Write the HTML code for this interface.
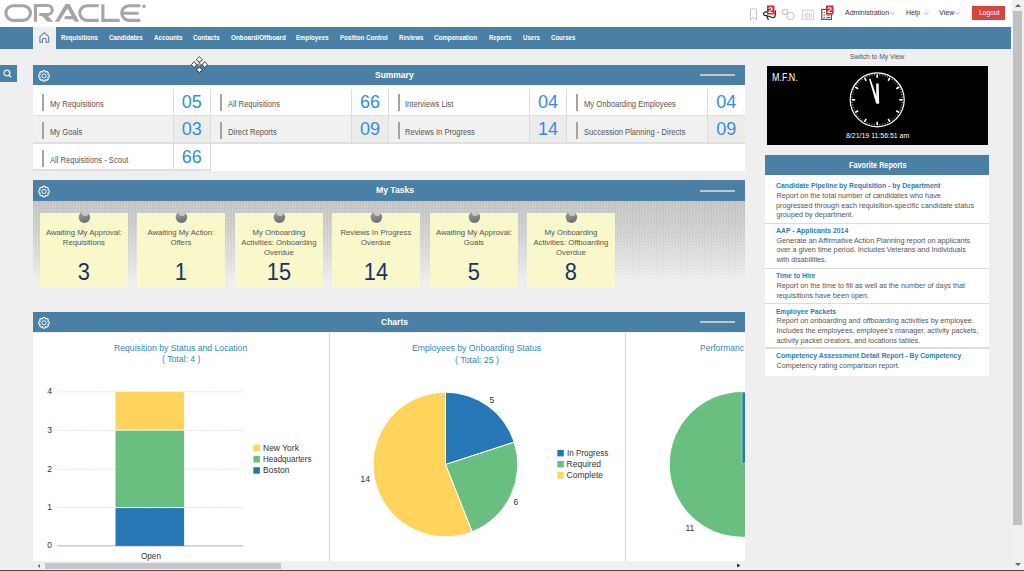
<!DOCTYPE html>
<html><head><meta charset="utf-8">
<style>
*{margin:0;padding:0;box-sizing:border-box}
html,body{width:1024px;height:571px;overflow:hidden;background:#efefef;font-family:"Liberation Sans",sans-serif}
.a{position:absolute}
.t{position:absolute;white-space:nowrap;transform-origin:0 50%}
.nv{color:#fff;font-weight:bold;font-size:7px}
.ph{position:absolute;left:33px;width:712px;height:20.5px;background:#4a80a5}
.min{position:absolute;left:667px;top:9.2px;width:35px;height:2px;background:#c9c4b8}
.lbl{color:#555;font-size:8.4px}
.num{color:#2f8cf0;font-size:18px}
.nt{color:#555;font-size:8px}
.nn{color:#1c2f66;font-size:23.5px;transform-origin:50% 50%}
.ct{color:#2a88c8;font-size:8.5px}
.ax{color:#333;font-size:8.5px}
.lg{color:#333;font-size:8.5px}
.fr{color:#2b7bc0;font-size:7px;font-weight:bold}
.fd{color:#555;font-size:7.25px}
</style></head><body>
<div class="a" style="left:0;top:0;width:1012px;height:27px;background:#fff"></div>
<svg class="a" style="left:0;top:0" width="150" height="27" viewBox="0 0 150 27">
<g fill="none" stroke="#a6a6a6" stroke-width="3.1">
<rect x="5.85" y="5.75" width="24.6" height="14.6" rx="7.3"/>
<path d="M35.45 4 V21.8 M35.45 5.55 H47.8 A4.45 4.45 0 0 1 47.8 14.45 H39.3"/>
<path d="M98.8 5.75 H87.05 A7.3 7.3 0 0 0 87.05 20.35 H98.8"/>
<path d="M102.9 4.2 V20.35 H119.7"/>
<path d="M140.3 5.75 H129.05 A7.3 7.3 0 0 0 129.05 20.35 H140.3 M123.5 13.2 H138.5"/>
<path d="M66 17.6 H75.5" stroke-linecap="round"/>
</g>
<g fill="#a6a6a6">
<polygon points="39.3,12.9 45.3,12.9 53.2,21.8 47.4,21.8"/>
<polygon points="54.9,21.8 65.5,4 69.6,4 79,21.8 74.7,21.8 67.55,8.6 59,21.8"/>
<circle cx="144" cy="6.3" r="1.8"/>
</g></svg>
<svg class="a" style="left:745px;top:3px" width="95" height="20" viewBox="745 3 95 20">
<path d="M750.5 9 H756.5 V20 L753.5 17 L750.5 20 Z" fill="none" stroke="#c4c4c4" stroke-width="1"/>
<path d="M767 11.8 L765 12 Q763.2 12.6 763.6 14.2 Q764 15.6 766.5 15.6 L772.5 17.5 Q775 18 775.2 15.5 L775.3 11 M766.8 15.8 L768.2 19.5" fill="none" stroke="#2a2a2a" stroke-width="1.3" stroke-linejoin="round" stroke-linecap="round"/>
<rect x="767" y="5.5" width="7.5" height="9" fill="#d9262c"/>
<text x="770.6" y="13.1" font-size="8.5" font-weight="bold" fill="#fff" text-anchor="middle" font-family="Liberation Sans">2</text>
<circle cx="785" cy="12" r="2.6" fill="none" stroke="#c8c8c8" stroke-width="1.1"/>
<circle cx="790.5" cy="16" r="3.5" fill="none" stroke="#c8c8c8" stroke-width="1.1"/>
<rect x="802.3" y="10.3" width="11.2" height="9" fill="none" stroke="#d2d2d2" stroke-width="1"/>
<path d="M805.2 12.8 V18.5 M807.2 11.8 V18.5 M809.2 12.3 V18.5 M811.2 13 V18.5" stroke="#cdcdcd" stroke-width="1"/>
<rect x="821.8" y="9.4" width="9.6" height="10" fill="none" stroke="#555" stroke-width="1.2"/>
<path d="M823.5 12.5 H825 M826.5 12.5 H830 M823.5 15 H825 M826.5 15 H830 M823.5 17.5 H825 M826.5 17.5 H830" stroke="#555" stroke-width="1"/>
<rect x="826" y="5.5" width="7.5" height="9" fill="#d9262c"/>
<text x="829.6" y="13.1" font-size="8.5" font-weight="bold" fill="#fff" text-anchor="middle" font-family="Liberation Sans">2</text>
</svg>
<span class="t " id="t1" style="left:845.0px;top:8.0px;line-height:10px;color:#333;font-size:7.5px;transform:scaleX(0.926);">Administration</span>
<span class="t " id="t2" style="left:906.4px;top:8.0px;line-height:10px;color:#333;font-size:7.5px;transform:scaleX(0.920);">Help</span>
<span class="t " id="t3" style="left:939.3px;top:8.0px;line-height:10px;color:#333;font-size:7.5px;transform:scaleX(0.949);">View</span>
<svg class="a" style="left:890.0px;top:12px" width="5" height="3"><path d="M0.5 0.5 L2.5 2.3 L4.5 0.5" fill="none" stroke="#999" stroke-width="0.8"/></svg>
<svg class="a" style="left:923.5px;top:12px" width="5" height="3"><path d="M0.5 0.5 L2.5 2.3 L4.5 0.5" fill="none" stroke="#999" stroke-width="0.8"/></svg>
<svg class="a" style="left:955.0px;top:12px" width="5" height="3"><path d="M0.5 0.5 L2.5 2.3 L4.5 0.5" fill="none" stroke="#999" stroke-width="0.8"/></svg>
<div class="a" style="left:972px;top:5.5px;width:33px;height:14px;background:#d9443f"></div>
<span class="t " id="t4" style="left:978.5px;top:7.8px;line-height:10px;color:#fff;font-size:8px;transform:scaleX(0.838);">Logout</span>
<div class="a" style="left:0;top:27px;width:1011px;height:22px;background:#4a80a5"></div>
<div class="a" style="left:33px;top:27px;width:23px;height:23px;background:#efefef"></div>
<svg class="a" style="left:38px;top:30.5px" width="13" height="14" viewBox="0 0 13 14"><path d="M1.9 11.2 V6.3 Q1.9 5.6 2.5 5.1 L6.3 1.7 L10.1 5.1 Q10.7 5.6 10.7 6.3 V11.2 H8.1 V8.7 Q8.1 7.2 6.3 7.2 Q4.5 7.2 4.5 8.7 V11.2 Z" fill="none" stroke="#5d7ea3" stroke-width="1.1" stroke-linejoin="round"/></svg>
<span class="t nv" id="t5" style="left:60.9px;top:33.3px;line-height:10px;;transform:scaleX(0.876);">Requisitions</span>
<span class="t nv" id="t6" style="left:108.9px;top:33.3px;line-height:10px;;transform:scaleX(0.896);">Candidates</span>
<span class="t nv" id="t7" style="left:153.6px;top:33.3px;line-height:10px;;transform:scaleX(0.890);">Accounts</span>
<span class="t nv" id="t8" style="left:193.0px;top:33.3px;line-height:10px;;transform:scaleX(0.888);">Contacts</span>
<span class="t nv" id="t9" style="left:230.8px;top:33.3px;line-height:10px;;transform:scaleX(0.905);">Onboard/Offboard</span>
<span class="t nv" id="t10" style="left:296.4px;top:33.3px;line-height:10px;;transform:scaleX(0.882);">Employees</span>
<span class="t nv" id="t11" style="left:339.8px;top:33.3px;line-height:10px;;transform:scaleX(0.878);">Position Control</span>
<span class="t nv" id="t12" style="left:399.0px;top:33.3px;line-height:10px;;transform:scaleX(0.867);">Reviews</span>
<span class="t nv" id="t13" style="left:434.2px;top:33.3px;line-height:10px;;transform:scaleX(0.890);">Compensation</span>
<span class="t nv" id="t14" style="left:489.2px;top:33.3px;line-height:10px;;transform:scaleX(0.854);">Reports</span>
<span class="t nv" id="t15" style="left:523.0px;top:33.3px;line-height:10px;;transform:scaleX(0.873);">Users</span>
<span class="t nv" id="t16" style="left:551.4px;top:33.3px;line-height:10px;;transform:scaleX(0.867);">Courses</span>
<div class="a" style="left:0;top:64.8px;width:17px;height:16.8px;background:#4a80a5"></div>
<svg class="a" style="left:0;top:65px" width="17" height="17"><circle cx="6.9" cy="8" r="2.9" fill="none" stroke="#e6edf2" stroke-width="1.4"/><path d="M9.1 10.3 L10.6 11.8" stroke="#e6edf2" stroke-width="1.5" stroke-linecap="round"/></svg>
<div class="ph" style="top:64.8px"><div class="min"></div></div>
<svg class="a" style="left:0;top:0;overflow:visible" width="1" height="1"><path d="M47.51 74.45 A1.50 1.50 0 1 1 47.51 77.35 A1.50 1.50 0 1 1 45.45 79.41 A1.50 1.50 0 1 1 42.55 79.41 A1.50 1.50 0 1 1 40.49 77.35 A1.50 1.50 0 1 1 40.49 74.45 A1.50 1.50 0 1 1 42.55 72.39 A1.50 1.50 0 1 1 45.45 72.39 A1.50 1.50 0 1 1 47.51 74.45 Z" fill="none" stroke="#fff" stroke-width="1.1"/><circle cx="44.00" cy="75.90" r="2.1" fill="none" stroke="#fff" stroke-width="0.9"/></svg>
<span class="t " id="t17" style="left:375.0px;top:70.3px;line-height:10px;color:#fff;font-weight:bold;font-size:8.5px;transform:scaleX(0.996);">Summary</span>
<div class="a" style="left:33px;top:85px;width:712px;height:86px;background:#fff"></div>
<div class="a" style="left:33.0px;top:115.25px;width:177.5px;height:1.5px;background:#e0e0e0"></div>
<div class="a" style="left:172.65px;top:88.5px;width:1.1px;height:27.5px;background:#dcdcdc"></div>
<div class="a" style="left:209.95px;top:88.5px;width:1.1px;height:27.5px;background:#dcdcdc"></div>
<div class="a" style="left:41.7px;top:94.1px;width:2.2px;height:16.6px;background:#aaa398"></div>
<span class="t lbl" id="t18" style="left:49.5px;top:99.2px;line-height:10px;;transform:scaleX(0.910);">My Requisitions</span>
<span class="t num" id="t19" style="left:173.2px;top:91.5px;line-height:20px;width:37.3px;text-align:center;">05</span>
<div class="a" style="left:210.5px;top:115.25px;width:178.0px;height:1.5px;background:#e0e0e0"></div>
<div class="a" style="left:350.95px;top:88.5px;width:1.1px;height:27.5px;background:#dcdcdc"></div>
<div class="a" style="left:387.95px;top:88.5px;width:1.1px;height:27.5px;background:#dcdcdc"></div>
<div class="a" style="left:220.0px;top:94.1px;width:2.2px;height:16.6px;background:#aaa398"></div>
<span class="t lbl" id="t20" style="left:227.6px;top:99.2px;line-height:10px;;transform:scaleX(0.910);">All Requisitions</span>
<span class="t num" id="t21" style="left:351.5px;top:91.5px;line-height:20px;width:37.0px;text-align:center;">66</span>
<div class="a" style="left:388.5px;top:115.25px;width:178.0px;height:1.5px;background:#e0e0e0"></div>
<div class="a" style="left:529.15px;top:88.5px;width:1.1px;height:27.5px;background:#dcdcdc"></div>
<div class="a" style="left:565.95px;top:88.5px;width:1.1px;height:27.5px;background:#dcdcdc"></div>
<div class="a" style="left:398.0px;top:94.1px;width:2.2px;height:16.6px;background:#aaa398"></div>
<span class="t lbl" id="t22" style="left:405.3px;top:99.2px;line-height:10px;;transform:scaleX(0.910);">Interviews List</span>
<span class="t num" id="t23" style="left:529.7px;top:91.5px;line-height:20px;width:36.8px;text-align:center;">04</span>
<div class="a" style="left:566.5px;top:115.25px;width:178.5px;height:1.5px;background:#e0e0e0"></div>
<div class="a" style="left:706.85px;top:88.5px;width:1.1px;height:27.5px;background:#dcdcdc"></div>
<div class="a" style="left:576.0px;top:94.1px;width:2.2px;height:16.6px;background:#aaa398"></div>
<span class="t lbl" id="t24" style="left:583.6px;top:99.2px;line-height:10px;;transform:scaleX(0.910);">My Onboarding Employees</span>
<span class="t num" id="t25" style="left:707.4px;top:91.5px;line-height:20px;width:37.6px;text-align:center;">04</span>
<div class="a" style="left:33.0px;top:116.0px;width:140.2px;height:27.0px;background:#f1f1f1"></div>
<div class="a" style="left:173.2px;top:116.0px;width:37.3px;height:27.0px;background:#ecece8"></div>
<div class="a" style="left:33.0px;top:142.25px;width:177.5px;height:1.5px;background:#e0e0e0"></div>
<div class="a" style="left:172.65px;top:116.0px;width:1.1px;height:27.0px;background:#dcdcdc"></div>
<div class="a" style="left:209.95px;top:116.0px;width:1.1px;height:27.0px;background:#dcdcdc"></div>
<div class="a" style="left:41.7px;top:122.2px;width:2.2px;height:16.6px;background:#aaa398"></div>
<span class="t lbl" id="t26" style="left:49.5px;top:127.1px;line-height:10px;;transform:scaleX(0.910);">My Goals</span>
<span class="t num" id="t27" style="left:173.2px;top:119.4px;line-height:20px;width:37.3px;text-align:center;">03</span>
<div class="a" style="left:210.5px;top:116.0px;width:141.0px;height:27.0px;background:#f1f1f1"></div>
<div class="a" style="left:351.5px;top:116.0px;width:37.0px;height:27.0px;background:#ecece8"></div>
<div class="a" style="left:210.5px;top:142.25px;width:178.0px;height:1.5px;background:#e0e0e0"></div>
<div class="a" style="left:350.95px;top:116.0px;width:1.1px;height:27.0px;background:#dcdcdc"></div>
<div class="a" style="left:387.95px;top:116.0px;width:1.1px;height:27.0px;background:#dcdcdc"></div>
<div class="a" style="left:220.0px;top:122.2px;width:2.2px;height:16.6px;background:#aaa398"></div>
<span class="t lbl" id="t28" style="left:227.6px;top:127.1px;line-height:10px;;transform:scaleX(0.910);">Direct Reports</span>
<span class="t num" id="t29" style="left:351.5px;top:119.4px;line-height:20px;width:37.0px;text-align:center;">09</span>
<div class="a" style="left:388.5px;top:116.0px;width:141.2px;height:27.0px;background:#f1f1f1"></div>
<div class="a" style="left:529.7px;top:116.0px;width:36.8px;height:27.0px;background:#ecece8"></div>
<div class="a" style="left:388.5px;top:142.25px;width:178.0px;height:1.5px;background:#e0e0e0"></div>
<div class="a" style="left:529.15px;top:116.0px;width:1.1px;height:27.0px;background:#dcdcdc"></div>
<div class="a" style="left:565.95px;top:116.0px;width:1.1px;height:27.0px;background:#dcdcdc"></div>
<div class="a" style="left:398.0px;top:122.2px;width:2.2px;height:16.6px;background:#aaa398"></div>
<span class="t lbl" id="t30" style="left:405.3px;top:127.1px;line-height:10px;;transform:scaleX(0.910);">Reviews In Progress</span>
<span class="t num" id="t31" style="left:529.7px;top:119.4px;line-height:20px;width:36.8px;text-align:center;">14</span>
<div class="a" style="left:566.5px;top:116.0px;width:140.9px;height:27.0px;background:#f1f1f1"></div>
<div class="a" style="left:707.4px;top:116.0px;width:37.6px;height:27.0px;background:#ecece8"></div>
<div class="a" style="left:566.5px;top:142.25px;width:178.5px;height:1.5px;background:#e0e0e0"></div>
<div class="a" style="left:706.85px;top:116.0px;width:1.1px;height:27.0px;background:#dcdcdc"></div>
<div class="a" style="left:576.0px;top:122.2px;width:2.2px;height:16.6px;background:#aaa398"></div>
<span class="t lbl" id="t32" style="left:583.6px;top:127.1px;line-height:10px;;transform:scaleX(0.910);">Succession Planning - Directs</span>
<span class="t num" id="t33" style="left:707.4px;top:119.4px;line-height:20px;width:37.6px;text-align:center;">09</span>
<div class="a" style="left:33.0px;top:169.25px;width:177.5px;height:1.5px;background:#e0e0e0"></div>
<div class="a" style="left:172.65px;top:143.0px;width:1.1px;height:27.0px;background:#dcdcdc"></div>
<div class="a" style="left:209.95px;top:143.0px;width:1.1px;height:27.0px;background:#dcdcdc"></div>
<div class="a" style="left:41.7px;top:150.3px;width:2.2px;height:16.6px;background:#aaa398"></div>
<span class="t lbl" id="t34" style="left:49.5px;top:155.0px;line-height:10px;;transform:scaleX(0.910);">All Requisitions - Scout</span>
<span class="t num" id="t35" style="left:173.2px;top:147.4px;line-height:20px;width:37.3px;text-align:center;">66</span>
<div class="ph" style="top:180.4px"><div class="min"></div></div>
<svg class="a" style="left:0;top:0;overflow:visible" width="1" height="1"><path d="M47.51 190.05 A1.50 1.50 0 1 1 47.51 192.95 A1.50 1.50 0 1 1 45.45 195.01 A1.50 1.50 0 1 1 42.55 195.01 A1.50 1.50 0 1 1 40.49 192.95 A1.50 1.50 0 1 1 40.49 190.05 A1.50 1.50 0 1 1 42.55 187.99 A1.50 1.50 0 1 1 45.45 187.99 A1.50 1.50 0 1 1 47.51 190.05 Z" fill="none" stroke="#fff" stroke-width="1.1"/><circle cx="44.00" cy="191.50" r="2.1" fill="none" stroke="#fff" stroke-width="0.9"/></svg>
<span class="t " id="t36" style="left:375.6px;top:185.3px;line-height:10px;color:#fff;font-weight:bold;font-size:8.5px;transform:scaleX(1.010);">My Tasks</span>
<div class="a" style="left:33px;top:200.9px;width:712px;height:78px;background:repeating-conic-gradient(rgba(255,255,255,.10) 0 25%,rgba(0,0,0,.03) 0 50%) 0 0/3px 3px,linear-gradient(#c4c4c4,#d2d2d2 40%,#e4e4e4 80%,#efefef)"></div>
<div class="a" style="left:39.8px;top:212.8px;width:87.8px;height:75px;background:#f9f8cb"></div>
<svg class="a" style="left:69.7px;top:200px;overflow:visible" width="30" height="30"><path d="M17.5 21.5 L23.5 27.5" stroke="#f3f1e0" stroke-width="2.6" stroke-linecap="round"/><defs><linearGradient id="pg0" x1="0" y1="0" x2="0.3" y2="1"><stop offset="0" stop-color="#a4a4a4"/><stop offset="1" stop-color="#727272"/></linearGradient></defs><circle cx="14.4" cy="17.1" r="5.8" fill="url(#pg0)"/><ellipse cx="15.2" cy="12.6" rx="3.6" ry="3.4" fill="#c8c8c8"/></svg>
<span class="t nt" id="t37" style="left:39.8px;top:228.0px;line-height:10px;width:87.8px;text-align:center;transform-origin:50% 50%;transform:scaleX(0.965);">Awaiting My Approval:</span>
<span class="t nt" id="t38" style="left:39.8px;top:238.0px;line-height:10px;width:87.8px;text-align:center;transform-origin:50% 50%;transform:scaleX(0.965);">Requisitions</span>
<span class="t nn" id="t39" style="left:39.8px;top:260.0px;line-height:24px;width:87.8px;text-align:center;transform-origin:50% 50%;transform:scaleX(0.930);">3</span>
<div class="a" style="left:137.3px;top:212.8px;width:87.8px;height:75px;background:#f9f8cb"></div>
<svg class="a" style="left:167.2px;top:200px;overflow:visible" width="30" height="30"><path d="M17.5 21.5 L23.5 27.5" stroke="#f3f1e0" stroke-width="2.6" stroke-linecap="round"/><defs><linearGradient id="pg1" x1="0" y1="0" x2="0.3" y2="1"><stop offset="0" stop-color="#a4a4a4"/><stop offset="1" stop-color="#727272"/></linearGradient></defs><circle cx="14.4" cy="17.1" r="5.8" fill="url(#pg1)"/><ellipse cx="15.2" cy="12.6" rx="3.6" ry="3.4" fill="#c8c8c8"/></svg>
<span class="t nt" id="t40" style="left:137.3px;top:228.0px;line-height:10px;width:87.8px;text-align:center;transform-origin:50% 50%;transform:scaleX(0.965);">Awaiting My Action:</span>
<span class="t nt" id="t41" style="left:137.3px;top:238.0px;line-height:10px;width:87.8px;text-align:center;transform-origin:50% 50%;transform:scaleX(0.965);">Offers</span>
<span class="t nn" id="t42" style="left:137.3px;top:260.0px;line-height:24px;width:87.8px;text-align:center;transform-origin:50% 50%;transform:scaleX(0.930);">1</span>
<div class="a" style="left:234.8px;top:212.8px;width:87.8px;height:75px;background:#f9f8cb"></div>
<svg class="a" style="left:264.7px;top:200px;overflow:visible" width="30" height="30"><path d="M17.5 21.5 L23.5 27.5" stroke="#f3f1e0" stroke-width="2.6" stroke-linecap="round"/><defs><linearGradient id="pg2" x1="0" y1="0" x2="0.3" y2="1"><stop offset="0" stop-color="#a4a4a4"/><stop offset="1" stop-color="#727272"/></linearGradient></defs><circle cx="14.4" cy="17.1" r="5.8" fill="url(#pg2)"/><ellipse cx="15.2" cy="12.6" rx="3.6" ry="3.4" fill="#c8c8c8"/></svg>
<span class="t nt" id="t43" style="left:234.8px;top:228.0px;line-height:10px;width:87.8px;text-align:center;transform-origin:50% 50%;transform:scaleX(0.965);">My Onboarding</span>
<span class="t nt" id="t44" style="left:234.8px;top:238.0px;line-height:10px;width:87.8px;text-align:center;transform-origin:50% 50%;transform:scaleX(0.965);">Activities: Onboarding</span>
<span class="t nt" id="t45" style="left:234.8px;top:248.0px;line-height:10px;width:87.8px;text-align:center;transform-origin:50% 50%;transform:scaleX(0.965);">Overdue</span>
<span class="t nn" id="t46" style="left:234.8px;top:260.0px;line-height:24px;width:87.8px;text-align:center;transform-origin:50% 50%;transform:scaleX(0.930);">15</span>
<div class="a" style="left:332.3px;top:212.8px;width:87.8px;height:75px;background:#f9f8cb"></div>
<svg class="a" style="left:362.2px;top:200px;overflow:visible" width="30" height="30"><path d="M17.5 21.5 L23.5 27.5" stroke="#f3f1e0" stroke-width="2.6" stroke-linecap="round"/><defs><linearGradient id="pg3" x1="0" y1="0" x2="0.3" y2="1"><stop offset="0" stop-color="#a4a4a4"/><stop offset="1" stop-color="#727272"/></linearGradient></defs><circle cx="14.4" cy="17.1" r="5.8" fill="url(#pg3)"/><ellipse cx="15.2" cy="12.6" rx="3.6" ry="3.4" fill="#c8c8c8"/></svg>
<span class="t nt" id="t47" style="left:332.3px;top:228.0px;line-height:10px;width:87.8px;text-align:center;transform-origin:50% 50%;transform:scaleX(0.965);">Reviews In Progress</span>
<span class="t nt" id="t48" style="left:332.3px;top:238.0px;line-height:10px;width:87.8px;text-align:center;transform-origin:50% 50%;transform:scaleX(0.965);">Overdue</span>
<span class="t nn" id="t49" style="left:332.3px;top:260.0px;line-height:24px;width:87.8px;text-align:center;transform-origin:50% 50%;transform:scaleX(0.930);">14</span>
<div class="a" style="left:429.8px;top:212.8px;width:87.8px;height:75px;background:#f9f8cb"></div>
<svg class="a" style="left:459.7px;top:200px;overflow:visible" width="30" height="30"><path d="M17.5 21.5 L23.5 27.5" stroke="#f3f1e0" stroke-width="2.6" stroke-linecap="round"/><defs><linearGradient id="pg4" x1="0" y1="0" x2="0.3" y2="1"><stop offset="0" stop-color="#a4a4a4"/><stop offset="1" stop-color="#727272"/></linearGradient></defs><circle cx="14.4" cy="17.1" r="5.8" fill="url(#pg4)"/><ellipse cx="15.2" cy="12.6" rx="3.6" ry="3.4" fill="#c8c8c8"/></svg>
<span class="t nt" id="t50" style="left:429.8px;top:228.0px;line-height:10px;width:87.8px;text-align:center;transform-origin:50% 50%;transform:scaleX(0.965);">Awaiting My Approval:</span>
<span class="t nt" id="t51" style="left:429.8px;top:238.0px;line-height:10px;width:87.8px;text-align:center;transform-origin:50% 50%;transform:scaleX(0.965);">Goals</span>
<span class="t nn" id="t52" style="left:429.8px;top:260.0px;line-height:24px;width:87.8px;text-align:center;transform-origin:50% 50%;transform:scaleX(0.930);">5</span>
<div class="a" style="left:527.3px;top:212.8px;width:87.8px;height:75px;background:#f9f8cb"></div>
<svg class="a" style="left:557.2px;top:200px;overflow:visible" width="30" height="30"><path d="M17.5 21.5 L23.5 27.5" stroke="#f3f1e0" stroke-width="2.6" stroke-linecap="round"/><defs><linearGradient id="pg5" x1="0" y1="0" x2="0.3" y2="1"><stop offset="0" stop-color="#a4a4a4"/><stop offset="1" stop-color="#727272"/></linearGradient></defs><circle cx="14.4" cy="17.1" r="5.8" fill="url(#pg5)"/><ellipse cx="15.2" cy="12.6" rx="3.6" ry="3.4" fill="#c8c8c8"/></svg>
<span class="t nt" id="t53" style="left:527.3px;top:228.0px;line-height:10px;width:87.8px;text-align:center;transform-origin:50% 50%;transform:scaleX(0.965);">My Onboarding</span>
<span class="t nt" id="t54" style="left:527.3px;top:238.0px;line-height:10px;width:87.8px;text-align:center;transform-origin:50% 50%;transform:scaleX(0.965);">Activities: Offboarding</span>
<span class="t nt" id="t55" style="left:527.3px;top:248.0px;line-height:10px;width:87.8px;text-align:center;transform-origin:50% 50%;transform:scaleX(0.965);">Overdue</span>
<span class="t nn" id="t56" style="left:527.3px;top:260.0px;line-height:24px;width:87.8px;text-align:center;transform-origin:50% 50%;transform:scaleX(0.930);">8</span>
<div class="ph" style="top:311.7px"><div class="min"></div></div>
<svg class="a" style="left:0;top:0;overflow:visible" width="1" height="1"><path d="M47.51 321.35 A1.50 1.50 0 1 1 47.51 324.25 A1.50 1.50 0 1 1 45.45 326.31 A1.50 1.50 0 1 1 42.55 326.31 A1.50 1.50 0 1 1 40.49 324.25 A1.50 1.50 0 1 1 40.49 321.35 A1.50 1.50 0 1 1 42.55 319.29 A1.50 1.50 0 1 1 45.45 319.29 A1.50 1.50 0 1 1 47.51 321.35 Z" fill="none" stroke="#fff" stroke-width="1.1"/><circle cx="44.00" cy="322.80" r="2.1" fill="none" stroke="#fff" stroke-width="0.9"/></svg>
<span class="t " id="t57" style="left:381.0px;top:317.2px;line-height:10px;color:#fff;font-weight:bold;font-size:8.5px;transform:scaleX(1.002);">Charts</span>
<div class="a" style="left:33px;top:332.5px;width:712px;height:228.5px;background:#fff"></div>
<div class="a" style="left:328.5px;top:332.5px;width:1.2px;height:228px;background:#d5d5d5"></div>
<div class="a" style="left:624.7px;top:332.5px;width:1.2px;height:228px;background:#d5d5d5"></div>
<span class="t ct" id="t58" style="left:114.2px;top:343.3px;line-height:10px;;transform:scaleX(1.018);">Requisition by Status and Location</span>
<span class="t ct" id="t59" style="left:161.7px;top:353.9px;line-height:10px;;transform:scaleX(1.020);">( Total: 4 )</span>
<span class="t ct" id="t60" style="left:412.4px;top:343.2px;line-height:10px;;transform:scaleX(1.020);">Employees by Onboarding Status</span>
<span class="t ct" id="t61" style="left:455.0px;top:354.6px;line-height:10px;;transform:scaleX(1.038);">( Total: 25 )</span>
<span class="t ct" id="t62" style="left:700.0px;top:343.2px;line-height:10px;;">Performanc</span>
<svg class="a" style="left:0;top:0" width="1024" height="571">
<line x1="57.4" y1="545.9" x2="243" y2="545.9" stroke="#b0b0b0" stroke-width="1"/>
<line x1="57.4" y1="507.6" x2="243" y2="507.6" stroke="#e6e6ea" stroke-width="1" stroke-dasharray="2.5,0.8"/>
<line x1="57.4" y1="469.2" x2="243" y2="469.2" stroke="#e6e6ea" stroke-width="1" stroke-dasharray="2.5,0.8"/>
<line x1="57.4" y1="430.5" x2="243" y2="430.5" stroke="#e6e6ea" stroke-width="1" stroke-dasharray="2.5,0.8"/>
<line x1="57.4" y1="391.8" x2="243" y2="391.8" stroke="#e6e6ea" stroke-width="1" stroke-dasharray="2.5,0.8"/>
<rect x="115.5" y="508.1" width="68.6" height="37.8" fill="#2577b5"/>
<rect x="115.5" y="430.8" width="68.6" height="76.3" fill="#68bf7f"/>
<rect x="115.5" y="391.9" width="68.6" height="37.8" fill="#fed45a"/>
<path d="M445.50 464.50 L445.50 392.20 A72.30 72.30 0 0 1 514.26 442.16 Z" fill="#2577b5" stroke="#fff" stroke-width="1"/>
<path d="M445.50 464.50 L514.26 442.16 A72.30 72.30 0 0 1 472.12 531.72 Z" fill="#68bf7f" stroke="#fff" stroke-width="1"/>
<path d="M445.50 464.50 L472.12 531.72 A72.30 72.30 0 1 1 445.50 392.20 Z" fill="#fed45a" stroke="#fff" stroke-width="1"/>
<clipPath id="c3"><rect x="626" y="333" width="119" height="228"/></clipPath>
<g clip-path="url(#c3)"><circle cx="742" cy="464.4" r="72.3" fill="#68bf7f"/><path d="M742.10 464.40 L742.10 392.10 A72.30 72.30 0 0 1 804.71 428.25 Z" fill="#2577b5" stroke="#e8f4ec" stroke-width="0.5"/></g>
<rect x="253.4" y="444.8" width="6.5" height="6.5" fill="#fed45a"/>
<rect x="253.4" y="456.0" width="6.5" height="6.5" fill="#68bf7f"/>
<rect x="253.4" y="467.2" width="6.5" height="6.5" fill="#2577b5"/>
<rect x="557.3" y="449.9" width="6.5" height="6.5" fill="#2577b5"/>
<rect x="557.3" y="461.0" width="6.5" height="6.5" fill="#68bf7f"/>
<rect x="557.3" y="472.1" width="6.5" height="6.5" fill="#fed45a"/>
</svg>
<span class="t ax" id="t63" style="left:47.2px;top:540.3px;line-height:10px;;">0</span>
<span class="t ax" id="t64" style="left:47.2px;top:502.0px;line-height:10px;;">1</span>
<span class="t ax" id="t65" style="left:47.2px;top:463.6px;line-height:10px;;">2</span>
<span class="t ax" id="t66" style="left:47.2px;top:424.9px;line-height:10px;;">3</span>
<span class="t ax" id="t67" style="left:47.2px;top:386.2px;line-height:10px;;">4</span>
<span class="t ax" id="t68" style="left:140.6px;top:551.1px;line-height:10px;;transform:scaleX(0.957);">Open</span>
<span class="t lg" id="t69" style="left:263.0px;top:442.8px;line-height:10px;;">New York</span>
<span class="t lg" id="t70" style="left:263.0px;top:454.0px;line-height:10px;;transform:scaleX(0.941);">Headquarters</span>
<span class="t lg" id="t71" style="left:263.0px;top:465.2px;line-height:10px;;">Boston</span>
<span class="t lg" id="t72" style="left:566.6px;top:447.9px;line-height:10px;;transform:scaleX(0.952);">In Progress</span>
<span class="t lg" id="t73" style="left:566.6px;top:459.0px;line-height:10px;;">Required</span>
<span class="t lg" id="t74" style="left:566.6px;top:470.1px;line-height:10px;;">Complete</span>
<span class="t lg" id="t75" style="left:489.5px;top:394.7px;line-height:10px;;">5</span>
<span class="t lg" id="t76" style="left:513.6px;top:496.9px;line-height:10px;;">6</span>
<span class="t lg" id="t77" style="left:360.5px;top:474.0px;line-height:10px;;">14</span>
<span class="t lg" id="t78" style="left:685.5px;top:523.0px;line-height:10px;;">11</span>
<span class="t " id="t79" style="left:850.3px;top:51.5px;line-height:10px;color:#555;font-size:7px;transform:scaleX(0.960);">Switch to My View</span>
<div class="a" style="left:766.6px;top:65.8px;width:221.2px;height:78.9px;background:#000"></div>
<span class="t " id="t80" style="left:771.7px;top:72.6px;line-height:10px;color:#fff;font-size:10px;transform:scaleX(0.893);">M.F.N.</span>
<svg class="a" style="left:0;top:0;overflow:visible" width="1" height="1">
<circle cx="877.2" cy="99.8" r="27.0" fill="none" stroke="#fff" stroke-width="1.2"/>
<line x1="877.20" y1="77.80" x2="877.20" y2="74.30" stroke="#fff" stroke-width="1.6"/>
<line x1="879.76" y1="75.43" x2="879.92" y2="73.94" stroke="#fff" stroke-width="0.6"/>
<line x1="882.29" y1="75.84" x2="882.61" y2="74.37" stroke="#fff" stroke-width="0.6"/>
<line x1="884.77" y1="76.50" x2="885.23" y2="75.07" stroke="#fff" stroke-width="0.6"/>
<line x1="887.17" y1="77.42" x2="887.78" y2="76.05" stroke="#fff" stroke-width="0.6"/>
<line x1="888.20" y1="80.75" x2="889.95" y2="77.72" stroke="#fff" stroke-width="1.6"/>
<line x1="891.60" y1="79.98" x2="892.48" y2="78.77" stroke="#fff" stroke-width="0.6"/>
<line x1="893.59" y1="81.59" x2="894.60" y2="80.48" stroke="#fff" stroke-width="0.6"/>
<line x1="895.41" y1="83.41" x2="896.52" y2="82.40" stroke="#fff" stroke-width="0.6"/>
<line x1="897.02" y1="85.40" x2="898.23" y2="84.52" stroke="#fff" stroke-width="0.6"/>
<line x1="896.25" y1="88.80" x2="899.28" y2="87.05" stroke="#fff" stroke-width="1.6"/>
<line x1="899.58" y1="89.83" x2="900.95" y2="89.22" stroke="#fff" stroke-width="0.6"/>
<line x1="900.50" y1="92.23" x2="901.93" y2="91.77" stroke="#fff" stroke-width="0.6"/>
<line x1="901.16" y1="94.71" x2="902.63" y2="94.39" stroke="#fff" stroke-width="0.6"/>
<line x1="901.57" y1="97.24" x2="903.06" y2="97.08" stroke="#fff" stroke-width="0.6"/>
<line x1="899.20" y1="99.80" x2="902.70" y2="99.80" stroke="#fff" stroke-width="1.6"/>
<line x1="901.57" y1="102.36" x2="903.06" y2="102.52" stroke="#fff" stroke-width="0.6"/>
<line x1="901.16" y1="104.89" x2="902.63" y2="105.21" stroke="#fff" stroke-width="0.6"/>
<line x1="900.50" y1="107.37" x2="901.93" y2="107.83" stroke="#fff" stroke-width="0.6"/>
<line x1="899.58" y1="109.77" x2="900.95" y2="110.38" stroke="#fff" stroke-width="0.6"/>
<line x1="896.25" y1="110.80" x2="899.28" y2="112.55" stroke="#fff" stroke-width="1.6"/>
<line x1="897.02" y1="114.20" x2="898.23" y2="115.08" stroke="#fff" stroke-width="0.6"/>
<line x1="895.41" y1="116.19" x2="896.52" y2="117.20" stroke="#fff" stroke-width="0.6"/>
<line x1="893.59" y1="118.01" x2="894.60" y2="119.12" stroke="#fff" stroke-width="0.6"/>
<line x1="891.60" y1="119.62" x2="892.48" y2="120.83" stroke="#fff" stroke-width="0.6"/>
<line x1="888.20" y1="118.85" x2="889.95" y2="121.88" stroke="#fff" stroke-width="1.6"/>
<line x1="887.17" y1="122.18" x2="887.78" y2="123.55" stroke="#fff" stroke-width="0.6"/>
<line x1="884.77" y1="123.10" x2="885.23" y2="124.53" stroke="#fff" stroke-width="0.6"/>
<line x1="882.29" y1="123.76" x2="882.61" y2="125.23" stroke="#fff" stroke-width="0.6"/>
<line x1="879.76" y1="124.17" x2="879.92" y2="125.66" stroke="#fff" stroke-width="0.6"/>
<line x1="877.20" y1="121.80" x2="877.20" y2="125.30" stroke="#fff" stroke-width="1.6"/>
<line x1="874.64" y1="124.17" x2="874.48" y2="125.66" stroke="#fff" stroke-width="0.6"/>
<line x1="872.11" y1="123.76" x2="871.79" y2="125.23" stroke="#fff" stroke-width="0.6"/>
<line x1="869.63" y1="123.10" x2="869.17" y2="124.53" stroke="#fff" stroke-width="0.6"/>
<line x1="867.23" y1="122.18" x2="866.62" y2="123.55" stroke="#fff" stroke-width="0.6"/>
<line x1="866.20" y1="118.85" x2="864.45" y2="121.88" stroke="#fff" stroke-width="1.6"/>
<line x1="862.80" y1="119.62" x2="861.92" y2="120.83" stroke="#fff" stroke-width="0.6"/>
<line x1="860.81" y1="118.01" x2="859.80" y2="119.12" stroke="#fff" stroke-width="0.6"/>
<line x1="858.99" y1="116.19" x2="857.88" y2="117.20" stroke="#fff" stroke-width="0.6"/>
<line x1="857.38" y1="114.20" x2="856.17" y2="115.08" stroke="#fff" stroke-width="0.6"/>
<line x1="858.15" y1="110.80" x2="855.12" y2="112.55" stroke="#fff" stroke-width="1.6"/>
<line x1="854.82" y1="109.77" x2="853.45" y2="110.38" stroke="#fff" stroke-width="0.6"/>
<line x1="853.90" y1="107.37" x2="852.47" y2="107.83" stroke="#fff" stroke-width="0.6"/>
<line x1="853.24" y1="104.89" x2="851.77" y2="105.21" stroke="#fff" stroke-width="0.6"/>
<line x1="852.83" y1="102.36" x2="851.34" y2="102.52" stroke="#fff" stroke-width="0.6"/>
<line x1="855.20" y1="99.80" x2="851.70" y2="99.80" stroke="#fff" stroke-width="1.6"/>
<line x1="852.83" y1="97.24" x2="851.34" y2="97.08" stroke="#fff" stroke-width="0.6"/>
<line x1="853.24" y1="94.71" x2="851.77" y2="94.39" stroke="#fff" stroke-width="0.6"/>
<line x1="853.90" y1="92.23" x2="852.47" y2="91.77" stroke="#fff" stroke-width="0.6"/>
<line x1="854.82" y1="89.83" x2="853.45" y2="89.22" stroke="#fff" stroke-width="0.6"/>
<line x1="858.15" y1="88.80" x2="855.12" y2="87.05" stroke="#fff" stroke-width="1.6"/>
<line x1="857.38" y1="85.40" x2="856.17" y2="84.52" stroke="#fff" stroke-width="0.6"/>
<line x1="858.99" y1="83.41" x2="857.88" y2="82.40" stroke="#fff" stroke-width="0.6"/>
<line x1="860.81" y1="81.59" x2="859.80" y2="80.48" stroke="#fff" stroke-width="0.6"/>
<line x1="862.80" y1="79.98" x2="861.92" y2="78.77" stroke="#fff" stroke-width="0.6"/>
<line x1="866.20" y1="80.75" x2="864.45" y2="77.72" stroke="#fff" stroke-width="1.6"/>
<line x1="867.23" y1="77.42" x2="866.62" y2="76.05" stroke="#fff" stroke-width="0.6"/>
<line x1="869.63" y1="76.50" x2="869.17" y2="75.07" stroke="#fff" stroke-width="0.6"/>
<line x1="872.11" y1="75.84" x2="871.79" y2="74.37" stroke="#fff" stroke-width="0.6"/>
<line x1="874.64" y1="75.43" x2="874.48" y2="73.94" stroke="#fff" stroke-width="0.6"/>
<polygon points="876.2,103.6 879,103.2 870.4,78.6 869,78.9" fill="#fff"/>
<polygon points="876.4,103.6 879.2,103.6 878.6,83.6 876.2,83.6" fill="#fff"/>
</svg>
<span class="t " id="t81" style="left:845.5px;top:130.5px;line-height:10px;color:#fff;font-size:7.5px;transform:scaleX(0.927);">8/21/19 11:56:51 am</span>
<div class="a" style="left:765.3px;top:154.7px;width:223.8px;height:20.4px;background:#4a80a5"></div>
<span class="t " id="t82" style="left:848.5px;top:159.9px;line-height:10px;color:#fff;font-weight:bold;font-size:8.5px;transform:scaleX(0.851);">Favorite Reports</span>
<div class="a" style="left:765.3px;top:175.3px;width:223.8px;height:200.7px;background:#fff"></div>
<div class="a" style="left:765.3px;top:222.5px;width:223.8px;height:1.3px;background:#dcdcdc"></div>
<div class="a" style="left:765.3px;top:267.6px;width:223.8px;height:1.3px;background:#dcdcdc"></div>
<div class="a" style="left:765.3px;top:302.8px;width:223.8px;height:1.3px;background:#dcdcdc"></div>
<div class="a" style="left:765.3px;top:347.3px;width:223.8px;height:1.3px;background:#dcdcdc"></div>
<span class="t fr" id="t83" style="left:776.4px;top:181.2px;line-height:10px;;transform:scaleX(0.977);">Candidate Pipeline by Requisition - by Department</span>
<span class="t fd" id="t84" style="left:776.4px;top:190.8px;line-height:10px;;">Report on the total number of candidates who have</span>
<span class="t fd" id="t85" style="left:776.4px;top:200.5px;line-height:10px;;transform:scaleX(1.005);">progressed through each requisition-specific candidate status</span>
<span class="t fd" id="t86" style="left:776.4px;top:210.2px;line-height:10px;;">grouped by department.</span>
<span class="t fr" id="t87" style="left:776.4px;top:226.0px;line-height:10px;;transform:scaleX(0.977);">AAP - Applicants 2014</span>
<span class="t fd" id="t88" style="left:776.4px;top:235.6px;line-height:10px;;">Generate an Affirmative Action Planning report on applicants</span>
<span class="t fd" id="t89" style="left:776.4px;top:245.3px;line-height:10px;;">over a given time period. Includes Veterans and Individuals</span>
<span class="t fd" id="t90" style="left:776.4px;top:255.0px;line-height:10px;;">with disabilities.</span>
<span class="t fr" id="t91" style="left:776.4px;top:271.3px;line-height:10px;;transform:scaleX(0.977);">Time to Hire</span>
<span class="t fd" id="t92" style="left:776.4px;top:280.9px;line-height:10px;;">Report on the time to fill as well as the number of days that</span>
<span class="t fd" id="t93" style="left:776.4px;top:290.6px;line-height:10px;;">requisitions have been open.</span>
<span class="t fr" id="t94" style="left:776.4px;top:306.7px;line-height:10px;;transform:scaleX(0.977);">Employee Packets</span>
<span class="t fd" id="t95" style="left:776.4px;top:316.3px;line-height:10px;;">Report on onboarding and offboarding activities by employee.</span>
<span class="t fd" id="t96" style="left:776.4px;top:326.0px;line-height:10px;;">Includes the employees, employee's manager, activity packets,</span>
<span class="t fd" id="t97" style="left:776.4px;top:335.7px;line-height:10px;;">activity packet creators, and locations tables.</span>
<span class="t fr" id="t98" style="left:776.4px;top:351.2px;line-height:10px;;transform:scaleX(0.977);">Competency Assessment Detail Report - By Competency</span>
<span class="t fd" id="t99" style="left:776.4px;top:360.8px;line-height:10px;;">Competency rating comparison report.</span>
<svg class="a" style="left:0;top:0;overflow:visible" width="1" height="1">
<path d="M199.4 61 V68.4 M195.5 64.7 H203.3" stroke="#555" stroke-width="1.6"/>
<path d="M199.4 61 V68.4 M195.5 64.7 H203.3" stroke="#ccc" stroke-width="0.6"/>
<g fill="#fff" stroke="#2a2a2a" stroke-width="0.9" stroke-linejoin="round">
<path d="M199.4 56.8 L202.5 59.8 L199.4 62 L196.3 59.8 Z"/>
<path d="M199.4 72.6 L202.5 69.6 L199.4 67.4 L196.3 69.6 Z"/>
<path d="M191.3 64.7 L194.3 61.6 L196.5 64.7 L194.3 67.8 Z"/>
<path d="M207.5 64.7 L204.5 61.6 L202.3 64.7 L204.5 67.8 Z"/>
</g></svg>
<div class="a" style="left:1012px;top:0;width:12px;height:571px;background:#f0f0f0"></div>
<div class="a" style="left:1013px;top:11px;width:9px;height:514px;background:#c1c1c1"></div>
<svg class="a" style="left:1012px;top:0" width="12" height="571"><path d="M3 7 L6 4 L9 7 Z" fill="#606060"/><path d="M3 563 L6 566 L9 563 Z" fill="#606060"/></svg>
<div class="a" style="left:33px;top:561px;width:712px;height:9px;background:#f0f0f0"></div>
<div class="a" style="left:44.5px;top:562.7px;width:236.5px;height:6.8px;background:#c6c6c6"></div>
<svg class="a" style="left:33px;top:561px" width="712" height="9"><path d="M7 3 L4.5 5 L7 7 Z" fill="#707070"/><path d="M704 2.5 L707.5 4.5 L704 6.5 Z" fill="#333"/></svg>
<div class="a" style="left:0;top:569.6px;width:1024px;height:1.4px;background:#4a4a56"></div>
</body></html>
